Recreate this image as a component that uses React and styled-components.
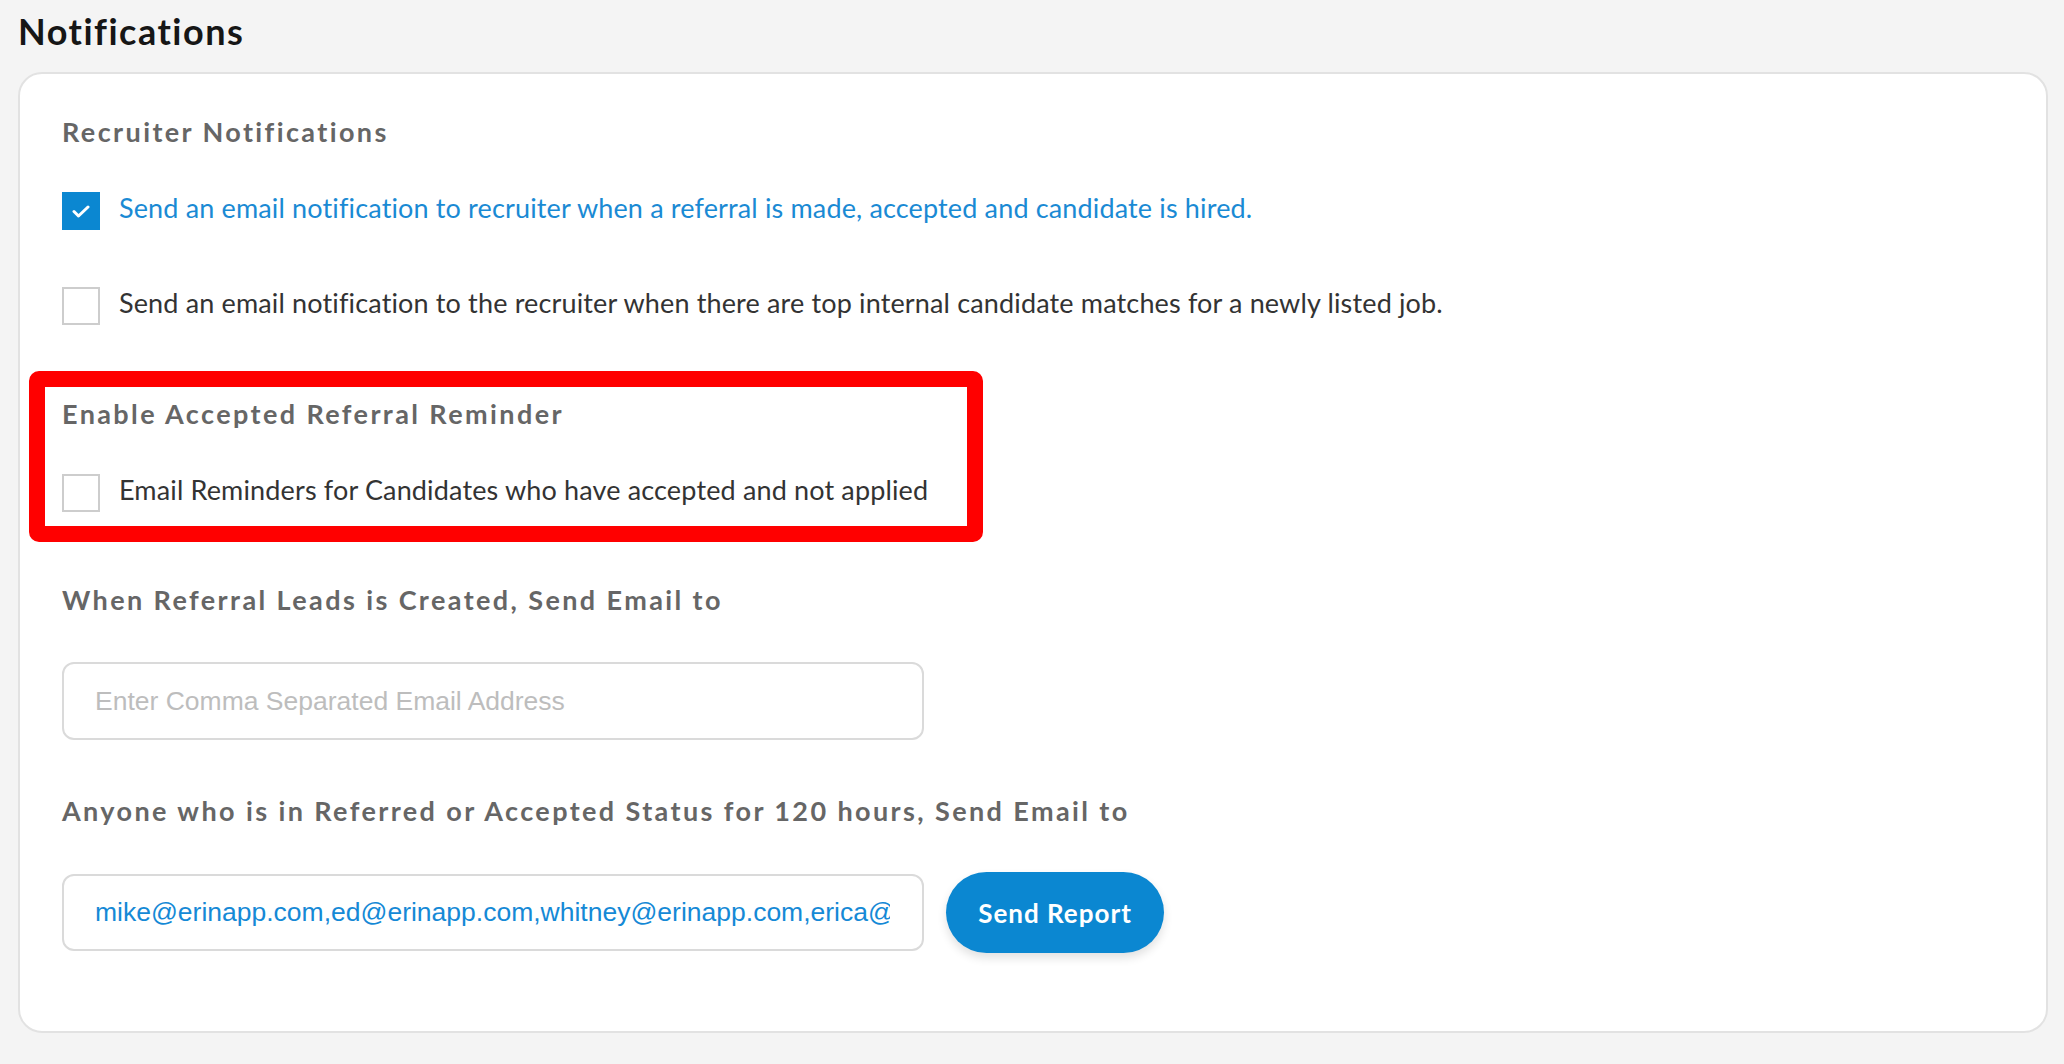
import React from "react";
import styled, { createGlobalStyle } from "styled-components";

const GlobalStyle = createGlobalStyle`
  body {
    margin: 0;
    background: #f4f4f4;
    font-family: Lato, "Open Sans", sans-serif;
  }
`;

const Page = styled.div`
  padding: 11px 16px 31px 18px;
`;

const Title = styled.h1`
  margin: 0;
  font-size: 36px;
  line-height: 40px;
  font-weight: 700;
  letter-spacing: 1.5px;
  color: #161616;
`;

const Card = styled.div`
  margin-top: 21px;
  background: #fff;
  border: 2px solid #e2e2e2;
  border-radius: 24px;
  padding: 42px 42px 78px 42px;
  display: flex;
  flex-direction: column;
  align-items: flex-start;
`;

const Heading = styled.h3`
  margin: ${(p) => p.$mt || 0}px 0 0 0;
  font-size: 27px;
  line-height: 32px;
  font-weight: 700;
  letter-spacing: 2.4px;
  color: #666;
`;

const Row = styled.label`
  margin-top: ${(p) => p.$mt || 0}px;
  display: flex;
  align-items: center;
  gap: 19px;
  cursor: pointer;
`;

const Box = styled.span`
  width: 38px;
  height: 38px;
  box-sizing: border-box;
  flex-shrink: 0;
  display: flex;
  align-items: center;
  justify-content: center;
  background: ${(p) => (p.$checked ? "#0b87d1" : "#fff")};
  border: 2px solid ${(p) => (p.$checked ? "#0b87d1" : "#cdcdcd")};
`;

const LabelText = styled.span`
  font-size: 27px;
  line-height: 30px;
  padding-bottom: 7px;
  letter-spacing: 0.15px;
  color: ${(p) => (p.$checked ? "#1a8ad4" : "#333")};
`;

const Highlight = styled.div`
  position: relative;
  width: 888px;
  margin-top: ${(p) => p.$mt || 0}px;
  display: flex;
  flex-direction: column;
  align-items: flex-start;
`;

const Frame = styled.div`
  position: absolute;
  top: -27px;
  bottom: -30px;
  left: -33px;
  right: -33px;
  border: 16px solid #ff0000;
  border-radius: 10px;
  pointer-events: none;
`;

const InputRow = styled.div`
  margin-top: ${(p) => p.$mt || 0}px;
  display: flex;
  align-items: center;
  gap: 22px;
`;

const EmailInput = styled.input`
  margin-top: ${(p) => p.$mt || 0}px;
  width: 862px;
  height: ${(p) => p.$h || 78}px;
  box-sizing: border-box;
  border: 2px solid #dadada;
  border-radius: 12px;
  padding: 0 32px 0 31px;
  font-family: "Liberation Sans", Arial, sans-serif;
  font-size: 26.5px;
  color: #1589d6;
  background: #fff;
  outline: none;

  &::placeholder {
    color: #bdbdbd;
  }
`;

const Button = styled.button`
  width: 218px;
  height: 81px;
  border: none;
  border-radius: 41px;
  background: #0b87d1;
  color: #fff;
  font-family: Lato, "Open Sans", sans-serif;
  font-size: 26px;
  font-weight: 700;
  letter-spacing: 1px;
  box-shadow: 0 5px 10px rgba(0, 0, 0, 0.12);
  cursor: pointer;
`;

const Check = () => (
  <svg width="18" height="13" viewBox="0 0 18 13">
    <polyline
      points="2,6.5 6.5,11 16,2"
      fill="none"
      stroke="#fff"
      strokeWidth="3"
      strokeLinecap="round"
      strokeLinejoin="round"
    />
  </svg>
);

const CheckRow = ({ mt, checked, children }) => (
  <Row $mt={mt}>
    <Box $checked={checked}>{checked && <Check />}</Box>
    <LabelText $checked={checked}>{children}</LabelText>
  </Row>
);

export default function App() {
  return (
    <>
      <GlobalStyle />
      <Page>
        <Title>Notifications</Title>
        <Card>
          <Heading>Recruiter Notifications</Heading>
          <CheckRow mt={44} checked>
            Send an email notification to recruiter when a referral is made,
            accepted and candidate is hired.
          </CheckRow>
          <CheckRow mt={57}>
            Send an email notification to the recruiter when there are top
            internal candidate matches for a newly listed job.
          </CheckRow>

          <Highlight $mt={73}>
            <Frame />
            <Heading>Enable Accepted Referral Reminder</Heading>
            <CheckRow mt={44}>
              Email Reminders for Candidates who have accepted and not applied
            </CheckRow>
          </Highlight>

          <Heading $mt={72}>When Referral Leads is Created, Send Email to</Heading>
          <EmailInput
            $mt={46}
            placeholder="Enter Comma Separated Email Address"
          />

          <Heading $mt={55}>
            Anyone who is in Referred or Accepted Status for 120 hours, Send
            Email to
          </Heading>
          <InputRow $mt={45}>
            <EmailInput
              $h={77}
              readOnly
              value="mike@erinapp.com,ed@erinapp.com,whitney@erinapp.com,erica@erinapp.com"
            />
            <Button>Send Report</Button>
          </InputRow>
        </Card>
      </Page>
    </>
  );
}
